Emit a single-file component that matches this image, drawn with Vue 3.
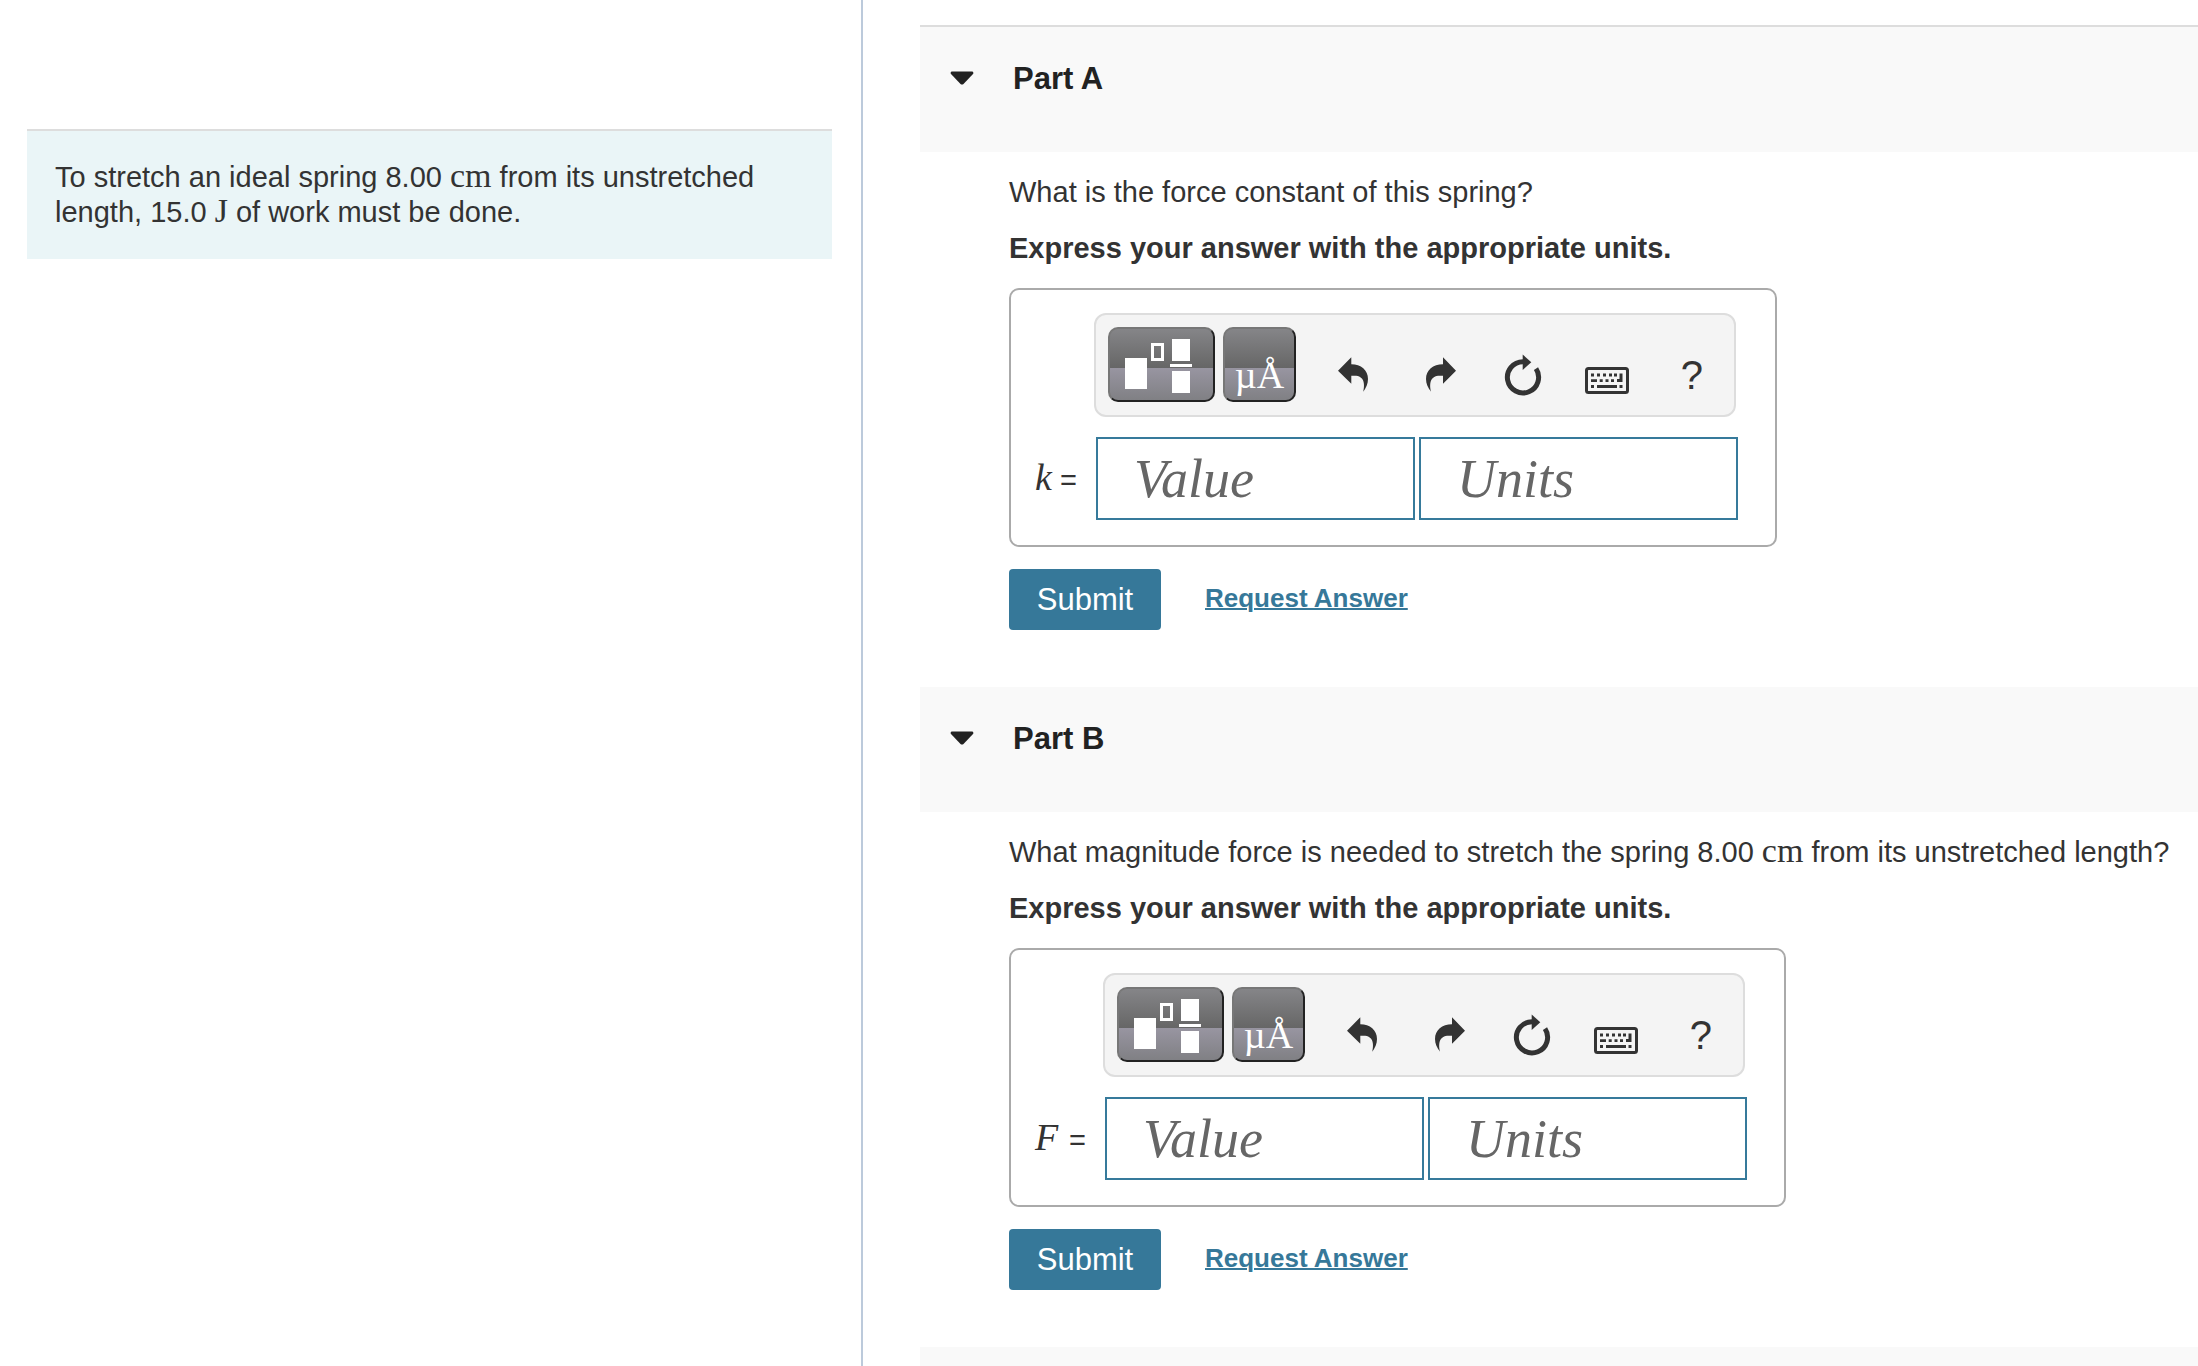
<script setup>
import { reactive } from 'vue'

const parts = reactive([
  {
    id: 'a',
    title: 'Part A',
    question: ['What is the force constant of this spring?'],
    symbol: 'k',
    wide: false,
    value: '',
    units: '',
  },
  {
    id: 'b',
    title: 'Part B',
    question: ['What magnitude force is needed to stretch the spring 8.00 ', 'cm', ' from its unstretched length?'],
    symbol: 'F',
    wide: true,
    value: '',
    units: '',
  },
])
</script>

<template>
  <div class="page">
    <aside class="intro">
      <p class="statement">
        To stretch an ideal spring 8.00 <span class="unit">cm</span> from its unstretched length, 15.0
        <span class="unit">J</span> of work must be done.
      </p>
    </aside>

    <main class="parts">
      <section v-for="part in parts" :key="part.id" class="part">
        <h2 class="part-header">
          <button type="button" class="part-toggle" aria-expanded="true">
            <svg class="caret" viewBox="0 0 24 14" aria-hidden="true">
              <path d="M1.5 0.5H22.5Q24 1.5 23 3L13.5 13Q12 14.2 10.5 13L1 3Q0 1.5 1.5 0.5Z" />
            </svg>
            <span>{{ part.title }}</span>
          </button>
        </h2>

        <form class="part-body" @submit.prevent>
          <p class="question">
            <template v-for="(piece, i) in part.question" :key="i"><span :class="{ unit: i === 1 }">{{ piece }}</span></template>
          </p>
          <p class="instruction">Express your answer with the appropriate units.</p>

          <div class="answer">
            <div class="toolbar" role="toolbar" aria-label="Equation tools">
              <button type="button" class="key key-templates" aria-label="Templates">
                <svg viewBox="0 0 103 71" aria-hidden="true">
                  <rect x="15" y="29" width="22" height="31" />
                  <rect x="42.5" y="15.5" width="10" height="15" class="hollow" />
                  <rect x="62" y="10" width="18" height="22" />
                  <rect x="60" y="35" width="22" height="3" />
                  <rect x="62" y="42" width="18" height="22" />
                </svg>
              </button>
              <button type="button" class="key key-symbols" aria-label="Symbols">µÅ</button>
              <div class="tools">
                <button type="button" class="tool" aria-label="Undo">
                  <svg viewBox="0 0 84 75" aria-hidden="true">
                    <path d="M27 43.7L40.3 30.3V37.3C50 37.5 57 43 57 52C57 57 55 61 52.3 64.7C54 57 53.5 48.7 43.5 48.7H40.3V56.7Z" />
                  </svg>
                </button>
                <button type="button" class="tool" aria-label="Redo">
                  <svg viewBox="0 0 84 75" aria-hidden="true">
                    <path d="M61 43.7L48 30.3V37.3C38 37.5 31 43 31 52C31 57 33 61 36 64.7C34.3 57 34.8 48.7 44.8 48.7H48V56.7Z" />
                  </svg>
                </button>
                <button type="button" class="tool" aria-label="Reset">
                  <svg viewBox="0 0 84 75" aria-hidden="true">
                    <path class="ring" d="M44 34.7A15.6 15.6 0 1 0 57 41.7" />
                    <path d="M43.7 27.5L52.3 35.3L43.7 43Z" />
                  </svg>
                </button>
                <button type="button" class="tool" aria-label="Keyboard shortcuts">
                  <svg viewBox="0 0 84 75" aria-hidden="true">
                    <rect class="frame" x="23.5" y="41.5" width="41" height="24" rx="2" />
                    <path d="M28 46.5h3v3h-3zM34 46.5h3v3h-3zM40 46.5h3v3h-3zM46 46.5h3v3h-3zM51 46.5h3v3h-3zM56.5 46.5h3v8.5h-5.5v-3h2.5zM28 52.3h6v2.7h-6zM36.7 52.3h3v2.7h-3zM42.5 52.3h3v2.7h-3zM48 52.3h3v2.7h-3zM28 58h3v3h-3zM34 58h20v3h-20zM56.5 58h3v3h-3z" />
                  </svg>
                </button>
                <button type="button" class="tool help" aria-label="Help">?</button>
              </div>
            </div>

            <label class="variable" :for="`value-${part.id}`">
              <span class="symbol" :class="{ 'symbol-wide': part.wide }">{{ part.symbol }}</span><span>=</span>
            </label>
            <div class="fields">
              <input :id="`value-${part.id}`" v-model="part.value" class="field" type="text" placeholder="Value" autocomplete="off" />
              <input v-model="part.units" class="field" type="text" placeholder="Units" aria-label="Units" autocomplete="off" />
            </div>
          </div>

          <div class="actions">
            <button type="submit" class="submit">Submit</button>
            <a class="request" href="#">Request Answer</a>
          </div>
        </form>
      </section>
      <div class="next-part"></div>
    </main>
  </div>
</template>

<style>
body {
  margin: 0;
  background: #fff;
}
</style>

<style scoped>
.page {
  display: grid;
  grid-template-columns: 861fr 1337fr;
  min-height: 100vh;
  font-family: "Liberation Sans", Arial, sans-serif;
  font-size: 29px;
  line-height: 35px;
  color: #333;
}

button {
  margin: 0;
  padding: 0;
  border: 0;
  background: none;
  color: inherit;
  font: inherit;
  cursor: pointer;
}

p,
h2 {
  margin: 0;
}

.intro {
  padding: 129px 29px 0 27px;
}

.statement {
  padding: 29px 28px;
  border-top: 2px solid #ddd;
  background: #eaf5f7;
}

.unit {
  font-family: "Liberation Serif", "Times New Roman", serif;
  font-size: 34px;
  line-height: 0;
}

.parts {
  display: flex;
  flex-direction: column;
  min-width: 0;
  padding: 25px 0 0 57px;
  border-left: 2px solid #bccadb;
}

.part-header {
  box-sizing: border-box;
  height: 125px;
  padding: 34px 30px;
  background: #f9f9f9;
  color: #222;
  font-size: 31px;
  line-height: 36px;
}

.part:first-child .part-header {
  height: 127px;
  border-top: 2px solid #ddd;
}

.part-toggle {
  display: flex;
  gap: 39px;
}

.caret {
  width: 24px;
  height: 14px;
  margin-top: 10px;
  fill: #222;
}

.part-body {
  padding: 23px 0 57px 89px;
}

.question {
  margin-bottom: 21px;
  white-space: pre-wrap;
}

.instruction {
  margin-bottom: 22px;
  font-weight: bold;
}

.answer {
  display: grid;
  grid-template-columns: auto auto;
  row-gap: 20px;
  width: fit-content;
  padding: 23px 39px 25px 24px;
  border: 2px solid #aaa;
  border-radius: 10px;
}

.toolbar {
  grid-column: 2;
  display: flex;
  box-sizing: border-box;
  width: 642px;
  height: 104px;
  padding: 12px 0 0 12px;
  border: 2px solid #ddd;
  border-radius: 12px;
  background: #f4f4f4;
}

.key {
  display: block;
  flex: none;
  box-sizing: border-box;
  height: 75px;
  border: 2px solid;
  border-color: #777 #222 #222 #777;
  border-radius: 10px;
  background: linear-gradient(#858588, #666 55%, #9895a1 55%, #808084);
  color: #fff;
}

.key-templates {
  width: 107px;
}

.key-templates svg {
  display: block;
  width: 103px;
  height: 71px;
  fill: #fff;
}

.key-templates .hollow {
  fill: none;
  stroke: #fff;
  stroke-width: 3;
}

.key-symbols {
  width: 73px;
  margin-left: 8px;
  padding-top: 20px;
  font-family: "Liberation Serif", "Times New Roman", serif;
  font-size: 38px;
  line-height: 44px;
}

.tools {
  display: flex;
  margin-left: 15px;
}

.tool {
  width: 84px;
  height: 75px;
}

.tool svg {
  display: block;
  width: 84px;
  height: 75px;
  fill: #333;
}

.tool .ring,
.tool .frame {
  fill: none;
  stroke: #333;
}

.tool .ring {
  stroke-width: 5;
}

.tool .frame {
  stroke-width: 3;
}

.help {
  padding: 22px 0 0 6px;
  font-size: 40px;
}

.variable {
  display: flex;
  align-items: baseline;
  padding-top: 23px;
  padding-right: 17px;
}

.symbol {
  width: 25px;
  font-family: "Liberation Serif", "Times New Roman", serif;
  font-size: 38px;
  font-style: italic;
}

.symbol-wide {
  width: 34px;
}

.fields {
  display: flex;
  gap: 4px;
  margin: 0 -2px 0 2px;
}

.field {
  box-sizing: border-box;
  width: 319px;
  height: 83px;
  padding: 0 36px;
  border: 2px solid #367a9b;
  border-radius: 0;
  background: #fff;
  color: #333;
  font-family: "Liberation Serif", "Times New Roman", serif;
  font-size: 54px;
  font-style: italic;
}

.field::placeholder {
  color: #666;
  opacity: 1;
}

.actions {
  display: flex;
  align-items: center;
  gap: 44px;
  margin-top: 22px;
}

.submit {
  width: 152px;
  height: 61px;
  border-radius: 4px;
  background: #367899;
  color: #fff;
  font-size: 31px;
}

.request {
  padding-bottom: 2px;
  color: #367899;
  font-size: 26px;
  font-weight: bold;
  text-decoration: underline;
  text-decoration-thickness: 2px;
}

.next-part {
  flex: 1;
  background: #f9f9f9;
}
</style>
